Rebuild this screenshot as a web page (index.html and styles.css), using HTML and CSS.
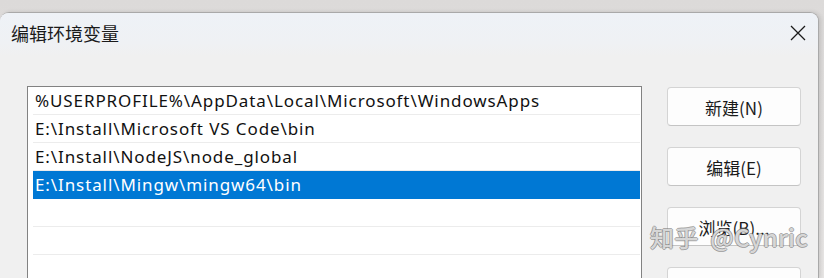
FILE: index.html
```html
<!DOCTYPE html>
<html lang="zh-CN">

<head>
    <meta charset="UTF-8">
    <title>编辑环境变量</title>
    <link rel="stylesheet" href="styles.css">
</head>

<body>
    <div class="dialog">
        <div class="title-bar">
            <span class="title">编辑环境变量</span>
            <svg class="close" width="16" height="16" viewBox="0 0 16 16">
                <path d="M1 1 L15 15 M15 1 L1 15" stroke="#1a1a1a" stroke-width="1.3" fill="none"/>
            </svg>
        </div>

        <div class="content">
            <div class="path-list">
                <div class="row">%USERPROFILE%\AppData\Local\Microsoft\WindowsApps</div>
                <div class="row">E:\Install\Microsoft VS Code\bin</div>
                <div class="row">E:\Install\NodeJS\node_global</div>
                <div class="row selected">E:\Install\Mingw\mingw64\bin</div>
                <div class="row"></div>
                <div class="row"></div>
                <div class="row"></div>
            </div>

            <div class="actions">
                <button class="btn">新建(N)</button>
                <button class="btn">编辑(E)</button>
                <button class="btn">浏览(B)...</button>
                <button class="btn"></button>
            </div>
        </div>

        <div class="watermark">知乎 @Cynric</div>
    </div>
</body>

</html>
```

FILE: styles.css
```css
body {
    margin: 0;
    padding: 0;
    height: 278px;
    overflow: hidden;
    background: linear-gradient(180deg, #dcdad9, #e9e7e6);
    font-family: "Noto Sans", "Noto Sans CJK SC", sans-serif;
}

.dialog {
    position: relative;
    margin-top: 12px;
    width: 818px;
    height: 266px;
    background: #f0f0f0;
    border-top: 1px solid #a9a9a9;
    border-right: 1px solid #a9a9a9;
    border-radius: 9px 9px 0 0;
    box-shadow: 2px 0 4px rgba(0, 0, 0, 0.12);
    overflow: hidden;
}

.title-bar {
    height: 43px;
    display: flex;
    align-items: center;
    justify-content: space-between;
    padding: 0 12px 0 11px;
    background: linear-gradient(180deg, #eef2f7, #eff1f4 70%, #f0f0f0);
}

.title {
    font-family: "Noto Sans CJK SC", sans-serif;
    font-size: 18px;
    color: #1a1a1a;
    margin-top: -3px;
}

.close {
    margin-top: -3px;
}

.content {
    display: flex;
    padding-left: 27px;
    padding-top: 30px;
    gap: 25px;
}

.path-list {
    box-sizing: border-box;
    width: 615px;
    height: 220px;
    background: #fff;
    border: 1px solid #828282;
    border-bottom: none;
    padding: 0 1px 0 5px;
}

.row {
    height: 27px;
    border-bottom: 1px solid #ececec;
    font-size: 17px;
    line-height: 27px;
    letter-spacing: 0.9px;
    color: #111;
    padding-left: 2px;
    white-space: nowrap;
}

.row.selected {
    background: #0078d4;
    color: #fff;
    border-bottom-color: #0078d4;
}

.actions {
    display: flex;
    flex-direction: column;
    gap: 21px;
    padding-top: 1px;
}

.btn {
    width: 134px;
    height: 39px;
    background: #fdfdfd;
    border: 1px solid #d4d4d4;
    border-bottom-color: #c4c4c4;
    border-radius: 4px;
    font-family: "Noto Sans CJK SC", sans-serif;
    font-size: 17px;
    color: #1a1a1a;
    padding: 2px 0 0;
}

.watermark {
    position: absolute;
    left: 650px;
    top: 206px;
    font-family: "Noto Sans CJK SC", sans-serif;
    font-size: 24px;
    font-weight: 500;
    color: rgba(255, 255, 255, 0.7);
    text-shadow: 1px 0 0 rgba(120, 120, 120, 0.6), -1px 0 0 rgba(120, 120, 120, 0.6), 0 1px 0 rgba(120, 120, 120, 0.6), 0 -1px 0 rgba(120, 120, 120, 0.6);
    letter-spacing: 0.3px;
    word-spacing: 6px;
}
```
